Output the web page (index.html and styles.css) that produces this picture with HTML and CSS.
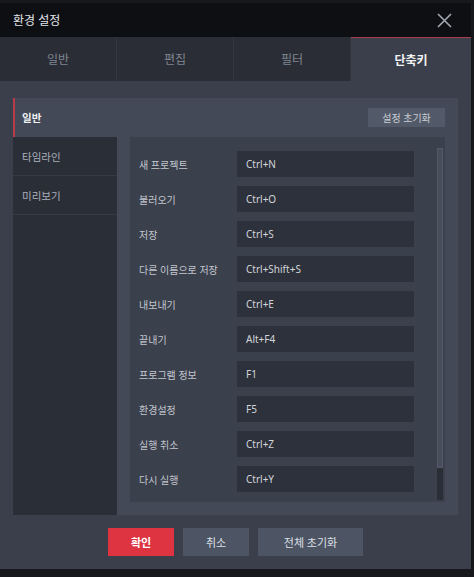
FILE: index.html
```html
<!DOCTYPE html>
<html lang="ko">
<head>
<meta charset="utf-8">
<title>환경 설정</title>
<link rel="stylesheet" href="styles.css">
</head>
<body>
<div class="dialog">
  <div class="titlebar">
    <span class="title">환경 설정</span>
    <svg class="close" width="15" height="15" viewBox="0 0 15 15"><path d="M1 1L14 14M14 1L1 14" stroke="#a3a7ae" stroke-width="1.6" fill="none"/></svg>
  </div>
  <div class="tabs">
    <div class="tab">일반</div>
    <div class="tab">편집</div>
    <div class="tab">필터</div>
    <div class="tab active">단축키</div>
  </div>
  <div class="content">
    <div class="panel">
      <div class="panel-head">
        <span class="head-title">일반</span>
        <button class="reset-btn">설정 초기화</button>
      </div>
      <div class="panel-body">
        <div class="sidebar">
          <div class="side-item">타임라인</div>
          <div class="side-item">미리보기</div>
        </div>
        <div class="list">
          <div class="rows">
            <div class="row"><span class="label">새 프로젝트</span><span class="key">Ctrl+N</span></div>
            <div class="row"><span class="label">불러오기</span><span class="key">Ctrl+O</span></div>
            <div class="row"><span class="label">저장</span><span class="key">Ctrl+S</span></div>
            <div class="row"><span class="label">다른 이름으로 저장</span><span class="key">Ctrl+Shift+S</span></div>
            <div class="row"><span class="label">내보내기</span><span class="key">Ctrl+E</span></div>
            <div class="row"><span class="label">끝내기</span><span class="key">Alt+F4</span></div>
            <div class="row"><span class="label">프로그램 정보</span><span class="key">F1</span></div>
            <div class="row"><span class="label">환경설정</span><span class="key">F5</span></div>
            <div class="row"><span class="label">실행 취소</span><span class="key">Ctrl+Z</span></div>
            <div class="row"><span class="label">다시 실행</span><span class="key">Ctrl+Y</span></div>
          </div>
          <div class="scrollbar"><div class="thumb"></div></div>
        </div>
      </div>
    </div>
  </div>
  <div class="footer">
    <button class="btn primary">확인</button>
    <button class="btn">취소</button>
    <button class="btn wide">전체 초기화</button>
  </div>
</div>
</body>
</html>
```
FILE: styles.css
```css
* { box-sizing: border-box; }
html, body { margin: 0; padding: 0; }
body {
  background: #17181c;
  font-family: "Noto Sans", "Noto Sans CJK KR", sans-serif;
  width: 474px;
  height: 577px;
  overflow: hidden;
}
.dialog {
  margin-top: 3px;
  width: 471px;
  height: 566px;
  background: #3a3f4b;
  display: flex;
  flex-direction: column;
}
.titlebar {
  height: 34px;
  flex: none;
  background: #0e0f13;
  display: flex;
  align-items: center;
  justify-content: space-between;
  padding: 0 19px 0 13px;
}
.title {
  color: #e4e5e8;
  font-size: 12px;
}
.close { display: block; }
.tabs {
  height: 44px;
  flex: none;
  display: grid;
  grid-template-columns: 117px 117px 117px 120px;
  background: #2a2d35;
}
.tab {
  display: flex;
  align-items: center;
  justify-content: center;
  color: #7f8591;
  font-size: 12px;
  border-right: 1px solid #343740;
}
.tab.active {
  background: #3a3f4b;
  color: #f2f3f5;
  font-weight: bold;
  border-right: none;
  border-top: 1px solid #a83d4d;
}
.content {
  flex: 1;
  padding: 17px 13px 13px;
  display: flex;
}
.panel {
  flex: 1;
  background: #434957;
  display: flex;
  flex-direction: column;
}
.panel-head {
  height: 39px;
  flex: none;
  border-left: 2px solid #b83a4b;
  display: flex;
  align-items: center;
  justify-content: space-between;
  padding: 0 13px 0 7px;
}
.head-title {
  color: #f0f1f3;
  font-size: 10.5px;
  font-weight: bold;
}
.reset-btn {
  border: none;
  background: #525968;
  color: #c9cdd4;
  font-family: inherit;
  font-size: 10px;
  width: 77px;
  height: 19px;
  padding: 0;
}
.panel-body {
  flex: 1;
  display: flex;
}
.sidebar {
  width: 104px;
  background: #2a2e37;
}
.side-item {
  height: 39px;
  display: flex;
  align-items: center;
  padding-left: 9px;
  color: #aab0ba;
  font-size: 10.5px;
  border-bottom: 1px solid #353a44;
}
.list {
  width: 315px;
  height: 365px;
  margin-left: 13px;
  background: #3b404d;
  display: flex;
  justify-content: space-between;
  padding: 11px 2px 2px 9px;
}
.rows {
  padding-top: 3px;
  display: flex;
  flex-direction: column;
  gap: 9px;
}
.row {
  display: flex;
  align-items: center;
  height: 26px;
}
.label {
  width: 98px;
  color: #c3c7ce;
  font-size: 10px;
}
.key {
  width: 177px;
  height: 26px;
  background: #2d313b;
  color: #d2d5da;
  font-size: 10px;
  display: flex;
  align-items: center;
  padding-left: 9px;
}
.scrollbar {
  width: 6px;
  background: #2a2e37;
  display: flex;
  flex-direction: column;
}
.thumb {
  height: 320px;
  background: #474d5b;
  border: 1px solid #545a68;
}
.footer {
  height: 41px;
  flex: none;
  display: flex;
  justify-content: center;
  align-items: flex-start;
  gap: 9px;
  padding-bottom: 13px;
}
.btn {
  width: 66px;
  height: 28px;
  border: none;
  background: #4d5464;
  color: #dde0e5;
  font-family: inherit;
  font-size: 11px;
  padding: 0;
}
.btn.primary {
  background: #de3341;
  color: #ffffff;
  font-weight: bold;
}
.btn.wide { width: 105px; }
```
